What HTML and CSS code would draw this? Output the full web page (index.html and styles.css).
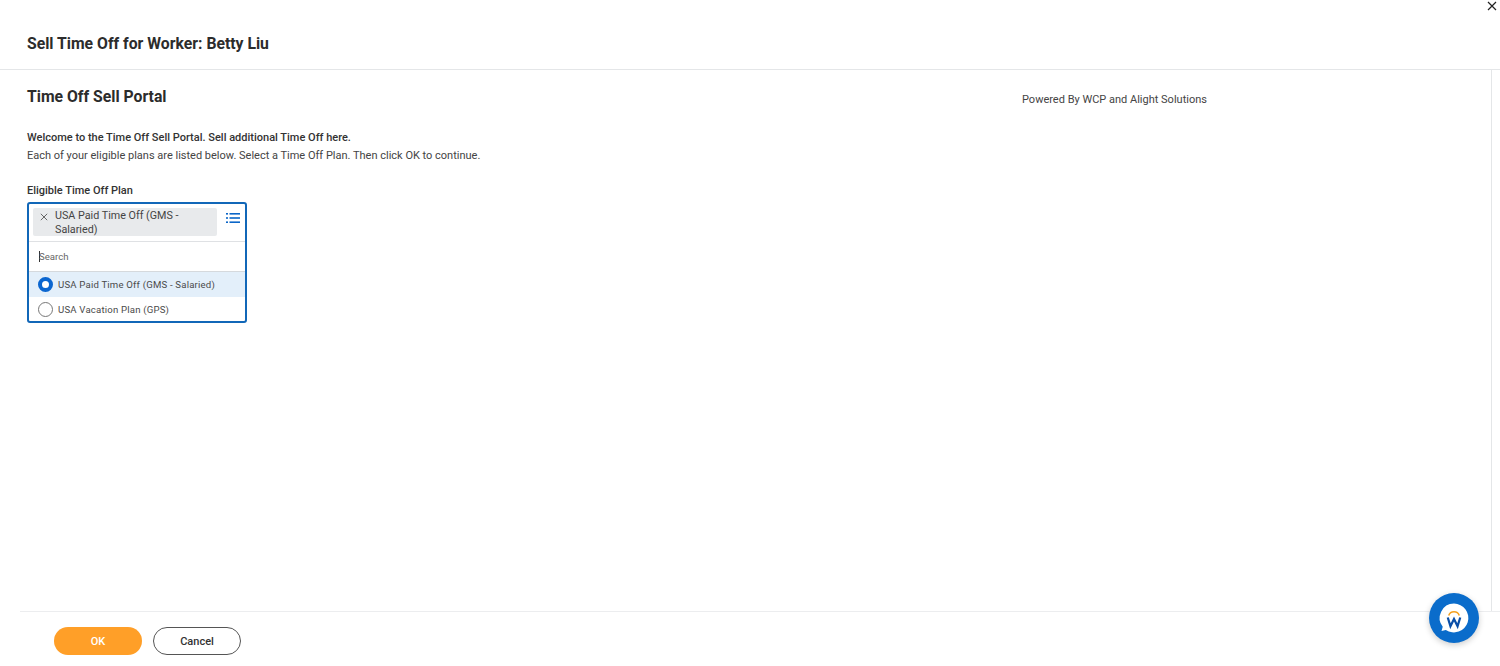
FILE: index.html
```html
<!DOCTYPE html>
<html lang="en">
<head>
<meta charset="utf-8">
<title>Sell Time Off</title>
<link rel="stylesheet" href="styles.css">
</head>
<body>
<div class="page">
  <button class="close" aria-label="Close">
    <svg width="10" height="10" viewBox="0 0 10 10"><path d="M1 1l8 8M9 1l-8 8" stroke="#222" stroke-width="1.2" fill="none"/></svg>
  </button>
  <header class="header"><h1>Sell Time Off for Worker: Betty Liu</h1></header>
  <div class="middle">
    <main class="content">
      <div class="top-row">
        <h2>Time Off Sell Portal</h2>
        <p class="powered">Powered By WCP and Alight Solutions</p>
      </div>
      <p class="intro"><strong>Welcome to the Time Off Sell Portal. Sell additional Time Off here.</strong><br>Each of your eligible plans are listed below. Select a Time Off Plan. Then click OK to continue.</p>
      <label class="field-label">Eligible Time Off Plan</label>
      <div class="picker">
        <div class="picker-head">
          <div class="pill">
            <svg class="pill-x" width="8" height="8" viewBox="0 0 8 8"><path d="M.8.8l6.400 6.400M7.200.8L.8 7.200" stroke="#666" stroke-width="1" fill="none"/></svg>
            <span>USA Paid Time Off (GMS - Salaried)</span>
          </div>
          <svg class="list-icon" width="14" height="12" viewBox="0 0 14 12"><g fill="#0b66c8"><rect x="0" y="1" width="2" height="1.6"/><rect x="3.5" y="1" width="10.5" height="1.6"/><rect x="0" y="5.2" width="2" height="1.6"/><rect x="3.5" y="5.2" width="10.5" height="1.6"/><rect x="0" y="9.4" width="2" height="1.6"/><rect x="3.5" y="9.4" width="10.5" height="1.6"/></g></svg>
        </div>
        <div class="search"><span class="caret"></span>Search</div>
        <div class="option selected"><span class="radio on"></span>USA Paid Time Off (GMS - Salaried)</div>
        <div class="option last"><span class="radio"></span>USA Vacation Plan (GPS)</div>
      </div>
    </main>
    <div class="scrollbar"></div>
  </div>
  <footer class="footer">
    <button class="btn primary">OK</button>
    <button class="btn secondary">Cancel</button>
  </footer>
  <div class="chat">
    <svg width="52" height="52" viewBox="0 0 52 52">
      <path d="M26 11a15 15 0 1 1-8.500 27.400L13 39.500l1.300-4.300A15 15 0 0 1 26 11z" fill="#fff"/>
      <path d="M20.500 23.500a5.800 5.800 0 0 1 11 0" stroke="#f5a01f" stroke-width="1.600" fill="none"/>
      <path d="M19.500 25.500l2.800 9 3.700-7.500 3.700 7.500 2.800-9" stroke="#0b4fa8" stroke-width="2.300" fill="none"/>
    </svg>
  </div>
</div>
</body>
</html>
```
FILE: styles.css
```css
* { box-sizing: border-box; }
html, body { margin: 0; padding: 0; height: 100%; overflow: hidden; }
body { font-family: Roboto, "Liberation Sans", sans-serif; color: #333; background: #fff; }
.page { position: relative; width: 1500px; height: 666px; display: flex; flex-direction: column; }
.close { position: absolute; top: 1px; right: 3px; width: 10px; height: 10px; padding: 0; border: 0; background: none; display: flex; }
.header { height: 70px; border-bottom: 1px solid #e4e6e8; padding: 34px 27px 0; }
h1 { margin: 0; font-size: 15.75px; line-height: 19px; font-weight: 700; color: #2c2c2c; }
.middle { flex: 1; display: flex; min-height: 0; }
.content { flex: 1; padding: 17px 27px 0; }
.scrollbar { width: 9px; background: #fff; border-left: 1px solid #e4e6e8; }
.top-row { display: flex; height: 36px; }
h2 { margin: 0; width: 995px; font-size: 15.75px; line-height: 20px; font-weight: 700; color: #2c2c2c; }
.powered { margin: 5px 0 0; font-size: 11px; line-height: 16px; color: #444; }
.intro { margin: 6px 0 0; font-size: 11px; line-height: 18px; color: #444; }
.intro strong { font-weight: 500; color: #333; }
.field-label { display: block; margin-top: 18px; font-size: 11px; line-height: 16px; font-weight: 500; color: #333; }
.picker { width: 220px; margin-top: 3px; border: 2px solid #1167b8; border-radius: 3px; background: #fff; }
.picker-head { display: flex; align-items: flex-start; justify-content: space-between; height: 38px; padding: 4px 5px 0 4px; border-bottom: 1px solid #dfe1e4; }
.pill { display: flex; width: 184px; height: 28px; background: #e8eaec; border-radius: 2px; font-size: 10.75px; line-height: 14px; color: #444; padding: 1px 28px 0 22px; position: relative; }
.pill-x { position: absolute; left: 7px; top: 5px; }
.list-icon { margin-top: 4px; }
.search { display: flex; align-items: center; height: 30px; padding-left: 10px; font-size: 9.6px; color: #666; border-bottom: 1px solid #d5d9dd; }
.caret { width: 1px; height: 11px; background: #333; margin-right: -1px; }
.option { display: flex; align-items: center; height: 25px; padding-left: 9px; font-size: 9.6px; letter-spacing: .19px; color: #4a4a4a; }
.option.last { height: 24px; }
.option.selected { background: #e3effa; }
.radio { width: 15px; height: 15px; border-radius: 50%; border: 1px solid #777; background: #fff; margin-right: 5px; flex: none; }
.radio.on { border: 4.5px solid #0b66d0; }
.footer { height: 55px; margin-left: 20px; border-top: 1px solid #ecedef; padding: 15px 0 0 34px; display: flex; gap: 11px; align-items: flex-start; }
.btn { width: 88px; height: 28px; border-radius: 14px; font-family: inherit; font-size: 11px; font-weight: 500; padding: 0; }
.primary { background: #ff9f28; border: 0; color: #fff; }
.secondary { background: #fff; border: 1px solid #555; color: #333; }
.chat { position: absolute; left: 1429px; top: 593px; width: 50px; height: 50px; border-radius: 50%; background: #0a6ccb; box-shadow: 0 2px 6px rgba(0,0,0,.2); display: flex; align-items: center; justify-content: center; }
```
